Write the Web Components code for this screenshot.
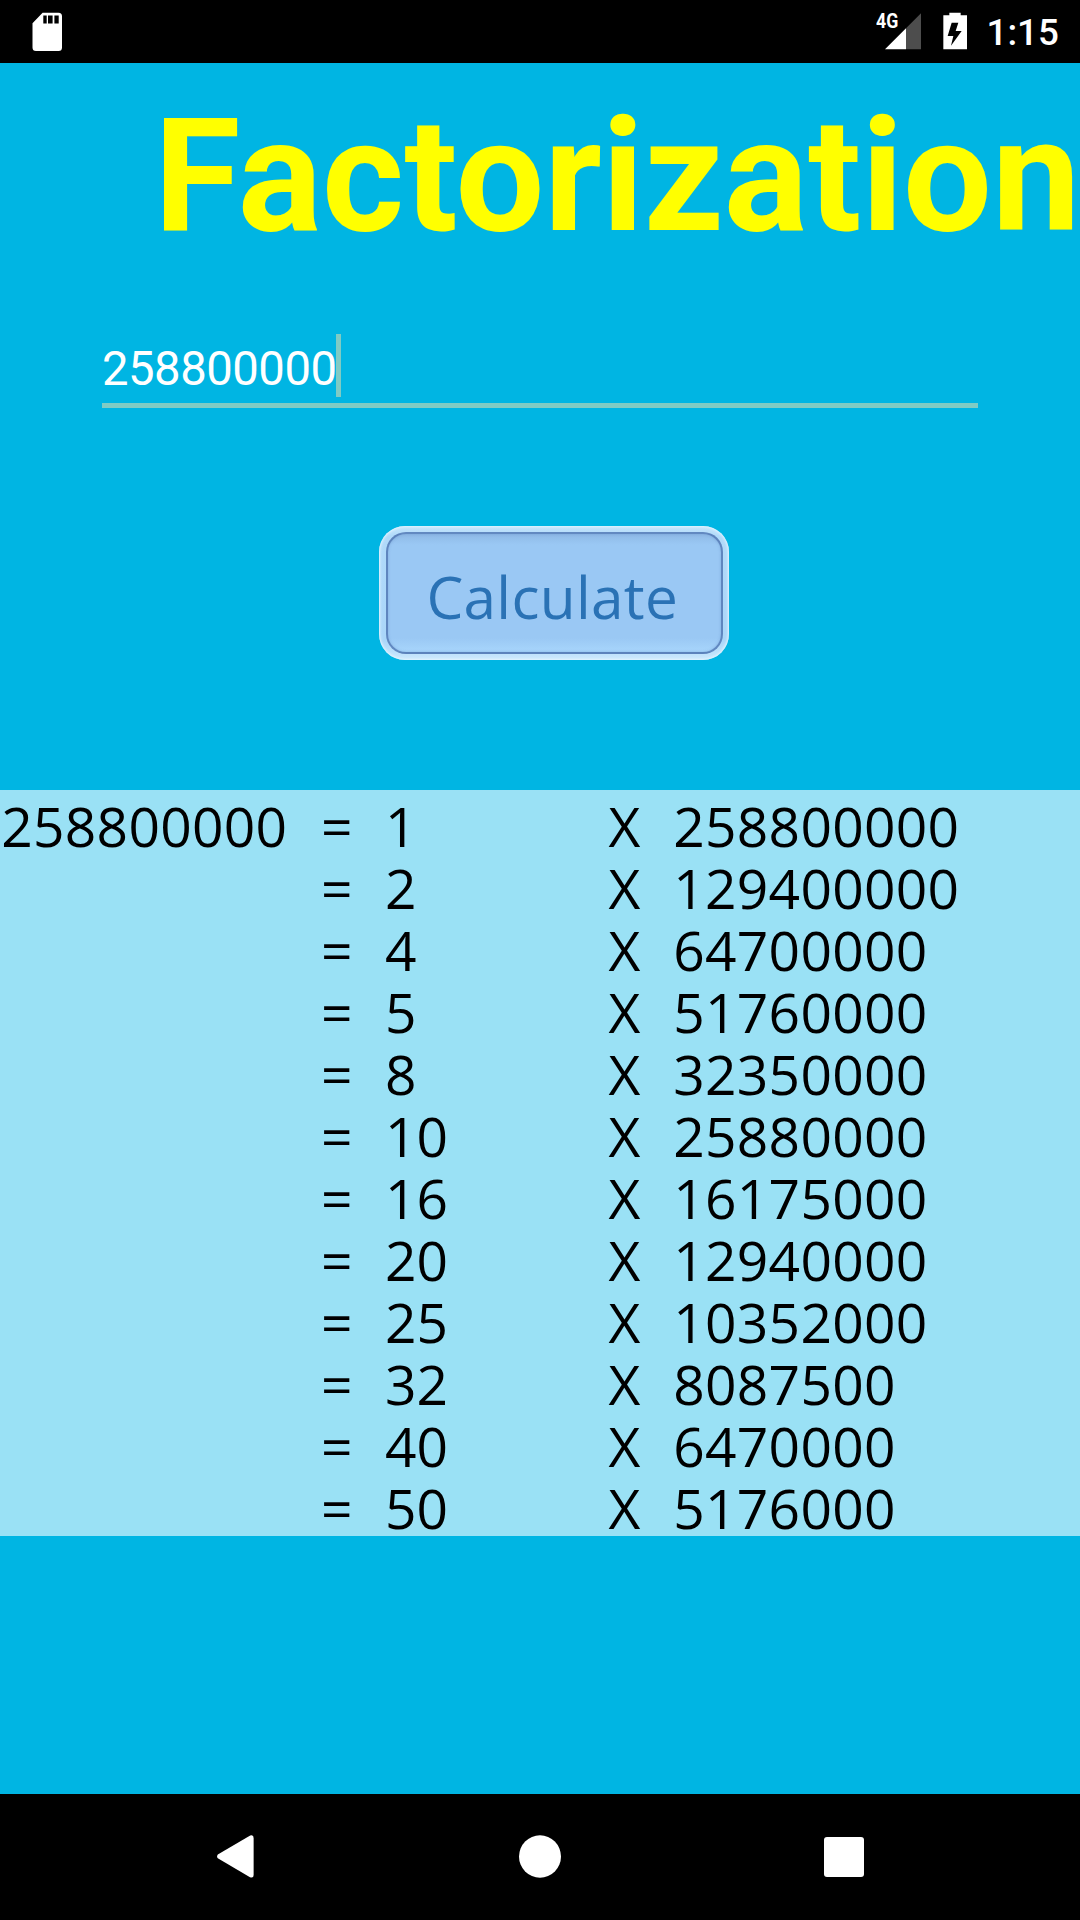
<!DOCTYPE html>
<html><head><meta charset="utf-8"><title>Factorization</title>
<style>
html,body{margin:0;padding:0;width:1080px;height:1920px;overflow:hidden;background:#000}
</style></head>
<body>
<factor-app></factor-app>
<script>
function define(name, css, html, extra){
  customElements.define(name, class extends HTMLElement{
    constructor(){super();const r=this.attachShadow({mode:'open'});r.innerHTML='<style>'+css+'</style>'+html;}
    connectedCallback(){ if(extra) extra(this); }
  });
}
define('status-bar',`
:host{display:flex;align-items:flex-start;height:63px;background:#000;color:#fff;position:relative}
.sd{display:block;margin:12px 0 0 32px;width:31px;height:40px}
.right{margin-left:auto;display:flex;align-items:flex-start}
.net{display:block;width:240px;height:63px}
.net-wrap{position:relative;display:block}
.g{position:absolute;left:35.5px;top:12px;font:700 19.7px/20px Roboto,sans-serif;transform:scaleX(.9);transform-origin:left top;letter-spacing:0}
.t{position:absolute;left:146.5px;top:11px;font:500 36.75px/43px Roboto,sans-serif;white-space:nowrap}
`,`
<svg class="sd" viewBox="0 0 31 40"><path fill="#fff" d="M10.6 .7H26.5A3.5 3.5 0 0 1 30 4.2V35.5A3.5 3.5 0 0 1 26.5 39H4A3.5 3.5 0 0 1 .5 35.5V11.2Z"/><path fill="#000" d="M11.3 3.6h3.4v8h-3.4zM16 3.6h4.6v8H16zM22.4 3.6h4.3v8h-4.3z"/></svg>
<div class="right"><div class="net-wrap"><svg class="net" viewBox="0 0 720 189"><path fill="#4d4d4d" d="M198 85 243 40V148H198Z"/><path fill="#fff" d="M135 148 198 85V148Z"/><path fill="#fff" d="M328 38h34v8h19v102h-71V46h18Z"/><path fill="#000" d="M335 68h20l-8 25h18l-32 44 7-29h-17Z"/></svg><span class="g">4G</span><span class="t">1:15</span></div></div>
`);
define('nav-bar',`
:host{display:flex;align-items:flex-start;justify-content:center;gap:264px;height:126px;background:#000;padding-top:41px;box-sizing:border-box}
svg{display:block}
.home{margin:0 -1px 0 1px}
`,`
<svg width="38" height="43" viewBox="0 0 38 43"><path fill="#fff" d="M34.2 .6 1.8 19.6Q.4 21.5 1.8 23.3L34 42.3Q37.6 43.5 37.6 40V3Q37.6-.5 34.2 .6Z"/></svg>
<svg class="home" width="42" height="43" viewBox="0 0 42 43"><ellipse cx="21" cy="21.5" rx="21" ry="21.2" fill="#fff"/></svg>
<svg width="40" height="43" viewBox="0 0 40 43"><rect x="0" y="2" width="40" height="40" rx="3" fill="#fff"/></svg>
`);
define('app-title',`
:host{display:block;margin-top:21px;padding-left:154px;overflow:hidden;white-space:nowrap;font:700 157.5px/185px Roboto,sans-serif;color:#ff0}
`,`<slot></slot>`);
define('number-field',`
:host{display:block;margin:65px 102px 0 102px;height:69px;border-bottom:5px solid #80cbc4;color:#fff;font:400 47.25px/63px Roboto,sans-serif;box-sizing:content-box}
.row{display:flex;align-items:flex-start;height:63px}
.v{padding-top:3.5px;letter-spacing:-.5px}
.c{width:5px;height:63px;background:#80cbc4;margin-left:-.5px}
`,`<div class="row"><span class="v"><slot></slot></span><span class="c"></span></div>`);
define('glass-button',`
:host{display:block;width:350px;height:134px;margin:118px 0 0 379px;box-sizing:border-box;padding:6px 6.5px 6px 7px;border-radius:26px;
 background:linear-gradient(#c4e5fc,#b0dafa 8%,#aad6f9 85%,#cbe8fd);box-shadow:inset 0 0 2.5px 1px #e4f4fe}
.in{height:100%;box-sizing:border-box;border:2px solid rgba(72,108,170,.72);border-radius:20px;background:linear-gradient(#8eb9e6,#9ac8f4 9%,#9ac8f4 88%,#a8d6fc);box-shadow:inset 0 0 3px rgba(80,120,180,.35);display:flex;align-items:center;justify-content:center;color:#2a72b5;font:400 58.5px/78px "Open Sans",sans-serif;letter-spacing:.3px}
.l{position:relative;top:3px;left:-2px}
`,`<div class="in"><span class="l"><slot></slot></span></div>`);
define('factor-table',`
:host{display:block;margin-top:130px;height:746px;background:#9ae1f5;padding-top:4.5px;box-sizing:border-box;color:#000}
`,`<slot></slot>`);
define('factor-row',`
:host{display:grid;grid-template-columns:321px 64px 223.5px 64.7px 1fr;height:62px;font:400 55.1px/62px "Open Sans",sans-serif;white-space:nowrap}
#a,#c{letter-spacing:.3px}
#a{padding-left:1.2px}
`,`<span id="a"></span><span>=</span><span id="b"></span><span>X</span><span id="c"></span>`,
 el=>{const s=el.shadowRoot;s.getElementById('a').textContent=el.getAttribute('n')||'';s.getElementById('b').textContent=el.getAttribute('f');s.getElementById('c').textContent=el.getAttribute('q');});
define('factor-app',`
:host{display:flex;flex-direction:column;width:1080px;height:1920px;background:#00b5e3}
main{flex:1;display:flex;flex-direction:column;min-height:0}
`,`<status-bar></status-bar><main>
<app-title>Factorization</app-title>
<number-field>258800000</number-field>
<glass-button>Calculate</glass-button>
<factor-table>
<factor-row n="258800000" f="1" q="258800000"></factor-row>
<factor-row f="2" q="129400000"></factor-row>
<factor-row f="4" q="64700000"></factor-row>
<factor-row f="5" q="51760000"></factor-row>
<factor-row f="8" q="32350000"></factor-row>
<factor-row f="10" q="25880000"></factor-row>
<factor-row f="16" q="16175000"></factor-row>
<factor-row f="20" q="12940000"></factor-row>
<factor-row f="25" q="10352000"></factor-row>
<factor-row f="32" q="8087500"></factor-row>
<factor-row f="40" q="6470000"></factor-row>
<factor-row f="50" q="5176000"></factor-row>
</factor-table>
</main><nav-bar></nav-bar>`);
</script>
</body></html>
